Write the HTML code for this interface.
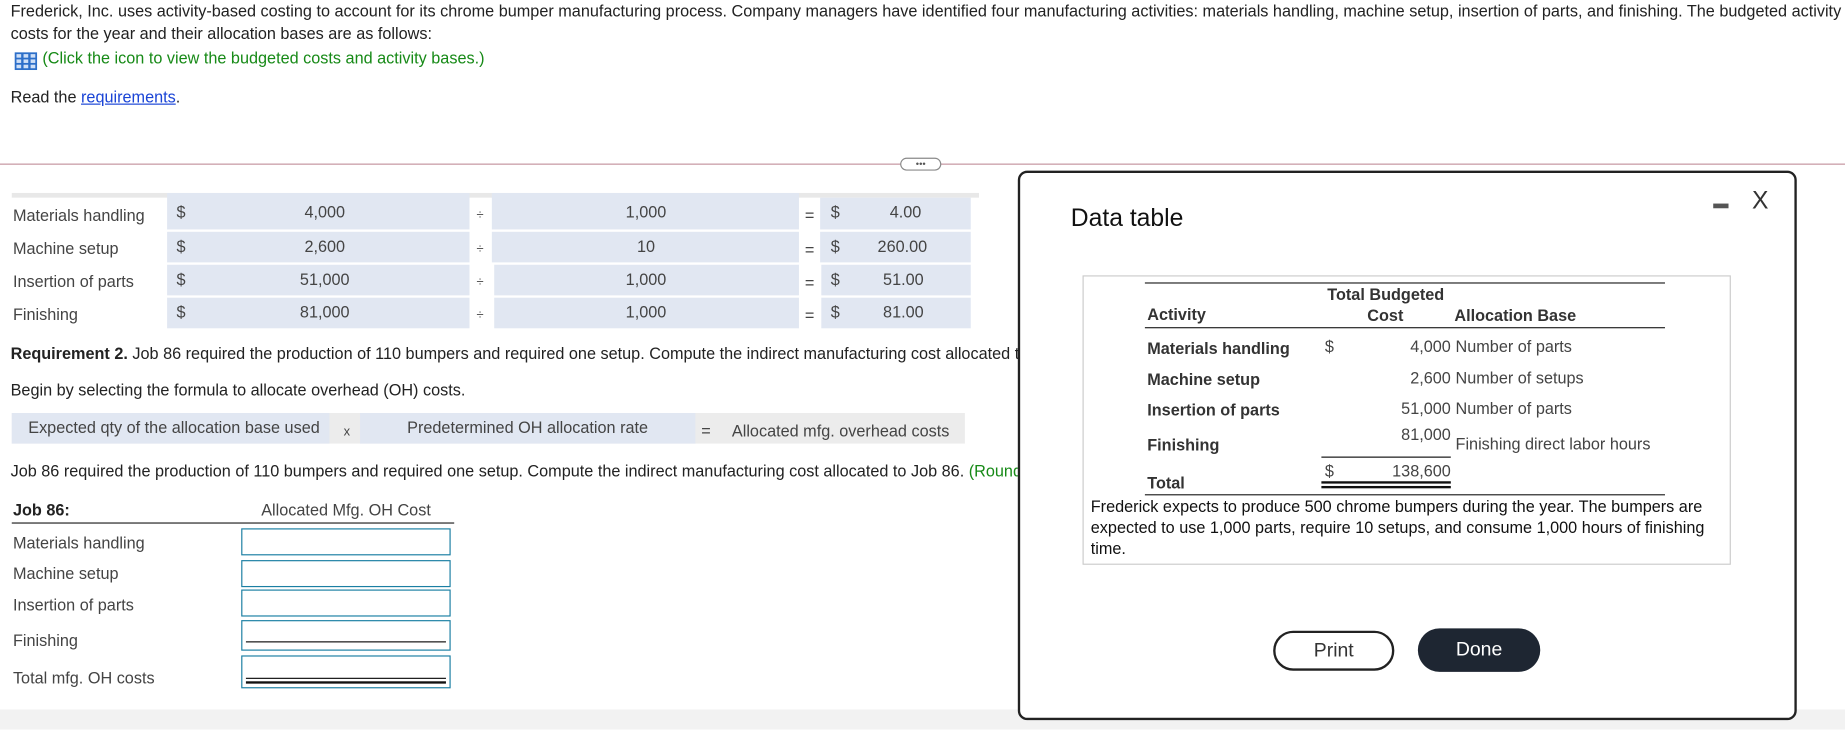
<!DOCTYPE html>
<html><head><meta charset="utf-8"><style>
html,body{margin:0;padding:0;background:#fff;overflow:hidden;width:1845px;height:730px}
#w{position:absolute;left:0;top:0;width:1568px;height:620px;transform:scale(1.17666);transform-origin:0 0;font-family:"Liberation Sans",Arial,sans-serif;font-size:13.8px;color:#222}
.a{position:absolute;white-space:nowrap}
.c{position:absolute;background:#e1e7f2}
.g{color:#444}
.inp{position:absolute;left:205px;width:176px;border:1px solid #1b7fa3;background:#fff}
.b{font-weight:bold}
</style></head><body><div id="w">
<div class="a" style="left:9px;top:2px">Frederick, Inc. uses activity-based costing to account for its chrome bumper manufacturing process. Company managers have identified four manufacturing activities: materials handling, machine setup, insertion of parts, and finishing. The budgeted activity</div>
<div class="a" style="left:9px;top:21px">costs for the year and their allocation bases are as follows:</div>
<svg class="a" style="left:12px;top:44px" width="20" height="16" viewBox="0 0 20 16"><rect x="0.5" y="0.5" width="19" height="15" fill="#2d6fc9"/><g fill="#cfe0f7"><rect x="2" y="2" width="4" height="3"/><rect x="8" y="2" width="4" height="3"/><rect x="14" y="2" width="4" height="3"/><rect x="2" y="6.5" width="4" height="3"/><rect x="8" y="6.5" width="4" height="3"/><rect x="14" y="6.5" width="4" height="3"/><rect x="2" y="11" width="4" height="3"/><rect x="8" y="11" width="4" height="3"/><rect x="14" y="11" width="4" height="3"/></g></svg>
<div class="a" style="left:36px;top:42px;color:#178a17">(Click the icon to view the budgeted costs and activity bases.)</div>
<div class="a" style="left:9px;top:75px">Read the <span style="color:#1a44d6;text-decoration:underline">requirements</span>.</div>
<div class="a" style="left:0;top:139px;width:1568px;height:1px;background:#c4949f"></div>
<div class="a" style="left:765px;top:134px;width:33px;height:9px;border:1px solid #8a8a8a;border-radius:6px;background:#fff;font-size:8px;line-height:9px;text-align:center;color:#555">•••</div>

<div class="a" style="left:10px;top:164px;width:822px;height:4px;background:#e8e8e8"></div>
<div class="c" style="left:142px;top:164px;width:257px;height:31px"></div>
<div class="c" style="left:418px;top:164px;width:261px;height:31px"></div>
<div class="c" style="left:697px;top:168px;width:128px;height:27px"></div>
<div class="c" style="left:142px;top:197px;width:257px;height:26px"></div>
<div class="c" style="left:418px;top:197px;width:261px;height:26px"></div>
<div class="c" style="left:697px;top:197px;width:128px;height:26px"></div>
<div class="c" style="left:142px;top:225px;width:257px;height:26px"></div>
<div class="c" style="left:420px;top:225px;width:259px;height:26px"></div>
<div class="c" style="left:698px;top:225px;width:127px;height:26px"></div>
<div class="c" style="left:142px;top:253px;width:257px;height:26px"></div>
<div class="c" style="left:420px;top:253px;width:259px;height:26px"></div>
<div class="c" style="left:698px;top:253px;width:127px;height:26px"></div>

<div class="a g" style="left:11px;top:176px">Materials handling</div>
<div class="a g" style="left:11px;top:204px">Machine setup</div>
<div class="a g" style="left:11px;top:232px">Insertion of parts</div>
<div class="a g" style="left:11px;top:260px">Finishing</div>
<div class="a g" style="left:150px;top:173px">$</div><div class="a g" style="left:150px;top:202px">$</div><div class="a g" style="left:150px;top:230px">$</div><div class="a g" style="left:150px;top:258px">$</div>
<div class="a g" style="left:226px;width:100px;text-align:center;top:173px">4,000</div>
<div class="a g" style="left:226px;width:100px;text-align:center;top:202px">2,600</div>
<div class="a g" style="left:226px;width:100px;text-align:center;top:230px">51,000</div>
<div class="a g" style="left:226px;width:100px;text-align:center;top:258px">81,000</div>
<div class="a g" style="left:405px;top:177px;font-size:11px">÷</div><div class="a g" style="left:405px;top:206px;font-size:11px">÷</div><div class="a g" style="left:405px;top:234px;font-size:11px">÷</div><div class="a g" style="left:405px;top:262px;font-size:11px">÷</div>
<div class="a g" style="left:499px;width:100px;text-align:center;top:173px">1,000</div>
<div class="a g" style="left:499px;width:100px;text-align:center;top:202px">10</div>
<div class="a g" style="left:499px;width:100px;text-align:center;top:230px">1,000</div>
<div class="a g" style="left:499px;width:100px;text-align:center;top:258px">1,000</div>
<div class="a g" style="left:684px;top:176px">=</div><div class="a g" style="left:684px;top:205px">=</div><div class="a g" style="left:684px;top:233px">=</div><div class="a g" style="left:684px;top:261px">=</div>
<div class="a g" style="left:706px;top:173px">$</div><div class="a g" style="left:706px;top:202px">$</div><div class="a g" style="left:706px;top:230px">$</div><div class="a g" style="left:706px;top:258px">$</div>
<div class="a g" style="left:700px;width:83px;text-align:right;top:173px">4.00</div>
<div class="a g" style="left:700px;width:88px;text-align:right;top:202px">260.00</div>
<div class="a g" style="left:700px;width:85px;text-align:right;top:230px">51.00</div>
<div class="a g" style="left:700px;width:85px;text-align:right;top:258px">81.00</div>

<div class="a" style="left:9px;top:293px"><span class="b">Requirement 2.</span> Job 86 required the production of 110 bumpers and required one setup. Compute the indirect manufacturing cost allocated to Job 86.</div>
<div class="a" style="left:9px;top:324px">Begin by selecting the formula to allocate overhead (OH) costs.</div>
<div class="a" style="left:10px;top:351px;width:810px;height:26px;background:#ececec"></div>
<div class="c" style="left:306px;top:351px;width:285px;height:26px"></div>
<div class="c" style="left:10px;top:351px;width:270px;height:26px"></div>
<div class="a g" style="left:24px;top:356px">Expected qty of the allocation base used</div>
<div class="a g" style="left:292px;top:361px;font-size:11px">x</div>
<div class="a g" style="left:346px;top:356px">Predetermined OH allocation rate</div>
<div class="a g" style="left:596px;top:359px">=</div>
<div class="a g" style="left:622px;top:359px">Allocated mfg. overhead costs</div>

<div class="a" style="left:9px;top:393px">Job 86 required the production of 110 bumpers and required one setup. Compute the indirect manufacturing cost allocated to Job 86. <span style="color:#178a17">(Round your answers to the nearest whole dollar.)</span></div>
<div class="a b" style="left:11px;top:426px">Job 86:</div>
<div class="a g" style="left:222px;top:426px">Allocated Mfg. OH Cost</div>
<div class="a" style="left:10px;top:444px;width:376px;height:1px;background:#222"></div>
<div class="a g" style="left:11px;top:454px">Materials handling</div>
<div class="a g" style="left:11px;top:480px">Machine setup</div>
<div class="a g" style="left:11px;top:507px">Insertion of parts</div>
<div class="a g" style="left:11px;top:537px">Finishing</div>
<div class="a g" style="left:11px;top:569px">Total mfg. OH costs</div>
<div class="inp" style="top:449px;height:21px"></div>
<div class="inp" style="top:476px;height:21px"></div>
<div class="inp" style="top:501px;height:21px"></div>
<div class="inp" style="top:527px;height:24px"><div style="position:absolute;left:3px;right:3px;top:17px;height:1px;background:#111"></div></div>
<div class="inp" style="top:557px;height:26px"><div style="position:absolute;left:3px;right:3px;top:18px;height:1px;background:#111"></div><div style="position:absolute;left:3px;right:3px;top:21px;height:2px;background:#111"></div></div>

<div class="a" style="left:0;top:603px;width:1568px;height:17px;background:#f2f2f2"></div>

<div class="a" style="left:865px;top:145px;width:658px;height:463px;border:2px solid #222;border-radius:8px;background:#fff"></div>
<div class="a" style="left:910px;top:174px;font-size:21px;color:#111">Data table</div>
<div class="a" style="left:1456px;top:173px;width:13px;height:4px;background:#555"></div>
<div class="a" style="left:1489px;top:159px;font-size:21px;color:#333">X</div>
<div class="a" style="left:920px;top:234px;width:549px;height:244px;border:1px solid #ccc"></div>
<div class="a" style="left:973px;top:240px;width:442px;height:1px;background:#222"></div>
<div class="a b" style="left:1128px;top:243px;color:#333">Total Budgeted</div>
<div class="a b" style="left:975px;top:260px;color:#333">Activity</div>
<div class="a b" style="left:1162px;top:261px;color:#333">Cost</div>
<div class="a b" style="left:1236px;top:261px;color:#333">Allocation Base</div>
<div class="a" style="left:973px;top:278px;width:442px;height:1px;background:#222"></div>
<div class="a b" style="left:975px;top:289px;color:#333">Materials handling</div>
<div class="a b" style="left:975px;top:315px;color:#333">Machine setup</div>
<div class="a b" style="left:975px;top:341px;color:#333">Insertion of parts</div>
<div class="a b" style="left:975px;top:371px;color:#333">Finishing</div>
<div class="a b" style="left:975px;top:403px;color:#333">Total</div>
<div class="a g" style="left:1126px;top:287px">$</div>
<div class="a g" style="left:1126px;top:393px">$</div>
<div class="a g" style="left:1140px;width:93px;text-align:right;top:287px">4,000</div>
<div class="a g" style="left:1140px;width:93px;text-align:right;top:314px">2,600</div>
<div class="a g" style="left:1140px;width:93px;text-align:right;top:340px">51,000</div>
<div class="a g" style="left:1140px;width:93px;text-align:right;top:362px">81,000</div>
<div class="a g" style="left:1140px;width:93px;text-align:right;top:393px">138,600</div>
<div class="a g" style="left:1237px;top:287px">Number of parts</div>
<div class="a g" style="left:1237px;top:314px">Number of setups</div>
<div class="a g" style="left:1237px;top:340px">Number of parts</div>
<div class="a g" style="left:1237px;top:370px">Finishing direct labor hours</div>
<div class="a" style="left:1123px;top:388px;width:110px;height:1px;background:#111"></div>
<div class="a" style="left:1123px;top:409px;width:110px;height:2px;background:#111"></div>
<div class="a" style="left:1123px;top:413px;width:110px;height:2px;background:#111"></div>
<div class="a" style="left:973px;top:420px;width:442px;height:1px;background:#222"></div>
<div class="a" style="left:927px;top:422px;width:535px;white-space:normal;line-height:18px;color:#111">Frederick expects to produce 500 chrome bumpers during the year. The bumpers are expected to use 1,000 parts, require 10 setups, and consume 1,000 hours of finishing time.</div>
<div class="a" style="left:1082px;top:536px;width:99px;height:30px;border:2px solid #222;border-radius:17px;text-align:center;line-height:30px;font-size:16.5px;color:#333">Print</div>
<div class="a" style="left:1205px;top:534px;width:104px;height:37px;border-radius:19px;background:#1e2632;text-align:center;line-height:37px;font-size:16.5px;color:#fff">Done</div>
</div></body></html>
